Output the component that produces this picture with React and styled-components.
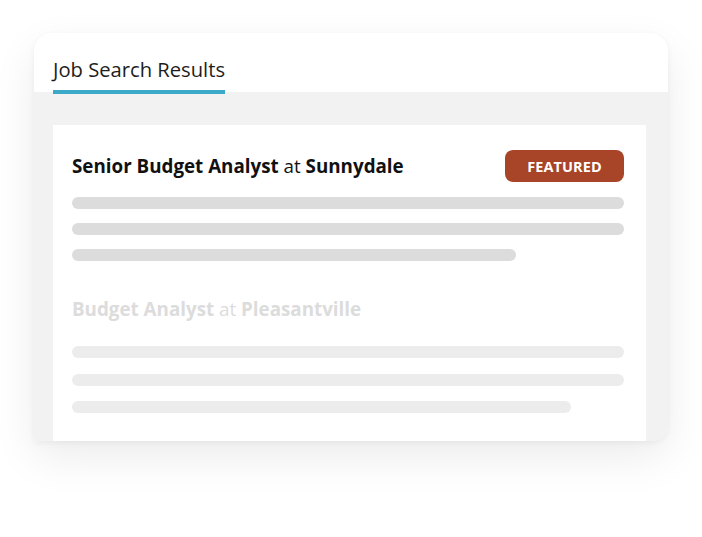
import React from 'react'
import styled, { createGlobalStyle } from 'styled-components'

const GlobalStyle = createGlobalStyle`
  html, body {
    margin: 0;
    padding: 0;
    background: #ffffff;
    font-family: "Open Sans", "Liberation Sans", sans-serif;
  }
`;

const Page = styled.div`
  padding: 33px 0 0 34px;
  height: 537px;
  box-sizing: border-box;
`;

const Card = styled.div`
  width: 634px;
  height: 408px;
  display: flex;
  flex-direction: column;
  background: #ffffff;
  border-radius: 18px 18px 16px 4px;
  overflow: hidden;
  box-shadow: 0 16px 44px rgba(0, 0, 0, 0.08), 0 2px 6px rgba(0, 0, 0, 0.05);
`;

const Header = styled.div`
  flex-shrink: 0;
  height: 59px;
  padding: 0 0 0 19px;
  display: flex;
  align-items: flex-end;
`;

const Tab = styled.div`
  position: relative;
  margin-bottom: -2px;
  font-size: 20.2px;
  color: #1d1d1d;
  padding-bottom: 8px;
  border-bottom: 4px solid #3ba9c8;
  line-height: 1.3;
`;

const Body = styled.div`
  flex: 1;
  min-height: 0;
  background: #f2f2f2;
  padding: 33px 22px 0 19px;
  display: flex;
`;

const Panel = styled.div`
  flex: 1;
  background: #ffffff;
  padding: 25px 22px 0 19px;
`;

const Job = styled.div`
  & + & {
    margin-top: 32px;
  }
`;

const TitleRow = styled.div`
  display: flex;
  justify-content: space-between;
  align-items: center;
  height: 32px;
`;

const Title = styled.div`
  font-size: 18.8px;
  color: ${p => (p.$muted ? '#dcdcdc' : '#111111')};
  b {
    font-weight: 700;
  }
`;

const Badge = styled.div`
  background: #a84428;
  color: #ffffff;
  font-weight: 700;
  font-size: 14.5px;
  letter-spacing: 0.1px;
  border-radius: 8px;
  width: 119px;
  height: 32px;
  display: flex;
  align-items: center;
  justify-content: center;
`;

const Lines = styled.div`
  display: flex;
  flex-direction: column;
  gap: ${p => p.$gap}px;
  margin-top: ${p => p.$top}px;
`;

const Line = styled.div`
  height: 12px;
  border-radius: 6px;
  background: ${p => (p.$muted ? '#ececec' : '#dcdcdc')};
  width: ${p => p.$width || '100%'};
`;

const App = () => {
  return (
    <Page>
      <GlobalStyle />
      <Card>
        <Header>
          <Tab>Job Search Results</Tab>
        </Header>
        <Body>
          <Panel>
            <Job>
              <TitleRow>
                <Title><b>Senior Budget Analyst</b> at <b>Sunnydale</b></Title>
                <Badge>FEATURED</Badge>
              </TitleRow>
              <Lines $top={15} $gap={14}>
                <Line />
                <Line />
                <Line $width="80.5%" />
              </Lines>
            </Job>
            <Job>
              <TitleRow>
                <Title $muted><b>Budget Analyst</b> at <b>Pleasantville</b></Title>
              </TitleRow>
              <Lines $top={21} $gap={15.5}>
                <Line $muted />
                <Line $muted />
                <Line $muted $width="90.4%" />
              </Lines>
            </Job>
          </Panel>
        </Body>
      </Card>
    </Page>
  )
}

export default App
